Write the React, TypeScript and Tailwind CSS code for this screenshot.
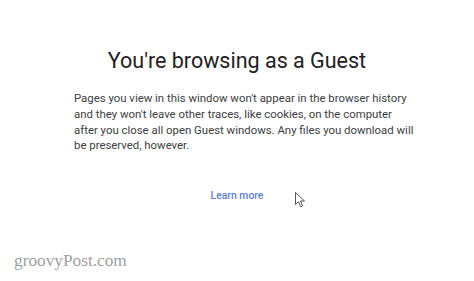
import React from 'react';

const Cursor: React.FC = () => (
  <svg width="12" height="17" viewBox="0 0 12 17" className="absolute left-[295px] top-[192px]">
    <path
      d="M0.5 0.5 L0.5 12.5 L3.5 9.8 L5.6 14.8 L7.6 13.9 L5.5 9 L9.5 9 Z"
      fill="#fff"
      stroke="#555"
      strokeWidth="1"
      strokeLinejoin="round"
    />
  </svg>
);

export default function App() {
  return (
    <div className="relative w-[474px] h-[281px] bg-white overflow-hidden font-['Roboto',sans-serif]">
      <div className="flex flex-col items-center pt-[47px]">
        <h1 className="text-[21.5px] leading-[28px] text-[#202124] font-normal">You're browsing as a Guest</h1>
        <p className="mt-[16px] w-[360px] self-start ml-[74px] whitespace-nowrap text-[11.4px] leading-[15.8px] text-[#3c4043]">
          Pages you view in this window won't appear in the browser history
          <br />
          and they won't leave other traces, like cookies, on the computer
          <br />
          after you close all open Guest windows. Any files you download will
          <br />
          be preserved, however.
        </p>
        <a className="mt-[34px] text-[10.4px] font-medium text-[#5b7fdc] leading-[16px]">Learn more</a>
      </div>
      <Cursor />
      <div className="absolute left-[14px] top-[248px] font-['Liberation_Serif',serif] text-[17.3px] text-[#a0a0a0]">
        groovyPost.com
      </div>
    </div>
  );
}
